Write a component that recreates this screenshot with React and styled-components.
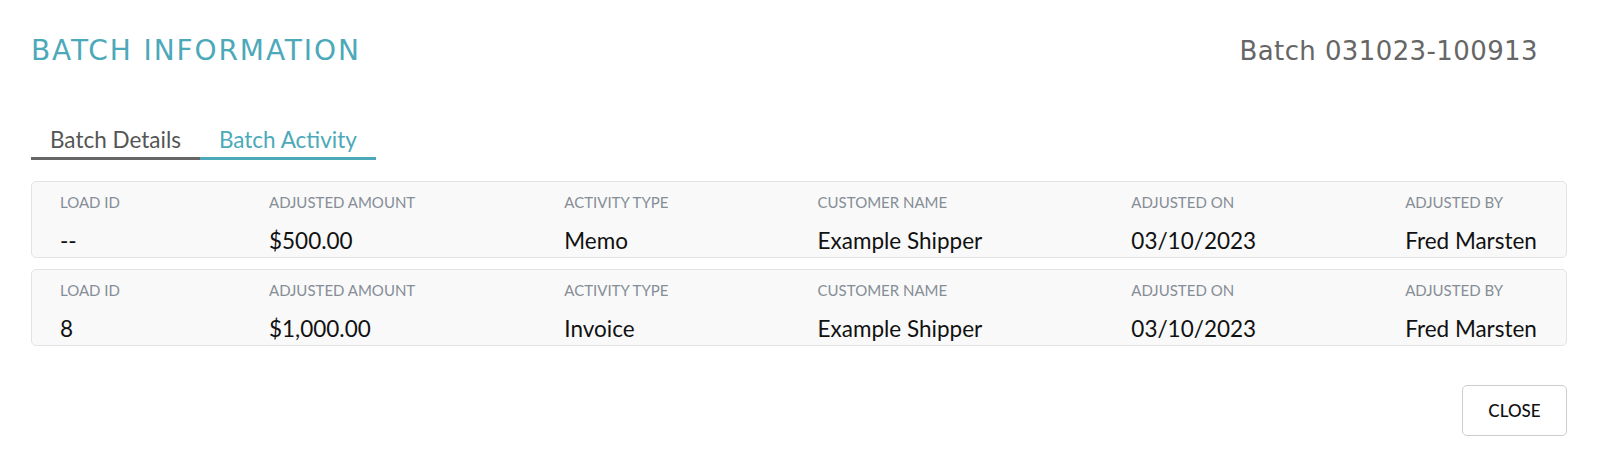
import React from "react";
import styled, { createGlobalStyle } from "styled-components";

const GlobalStyle = createGlobalStyle`
  body {
    margin: 0;
    background: #fff;
    font-family: Lato, "Noto Sans", sans-serif;
  }
`;

const rows = [
  { loadId: "--", amount: "$500.00", type: "Memo", customer: "Example Shipper", on: "03/10/2023", by: "Fred Marsten" },
  { loadId: "8", amount: "$1,000.00", type: "Invoice", customer: "Example Shipper", on: "03/10/2023", by: "Fred Marsten" },
];

const columns = [
  ["LOAD ID", "loadId"],
  ["ADJUSTED AMOUNT", "amount"],
  ["ACTIVITY TYPE", "type"],
  ["CUSTOMER NAME", "customer"],
  ["ADJUSTED ON", "on"],
  ["ADJUSTED BY", "by"],
];

function App() {
  return (
    <>
      <GlobalStyle />
      <Modal>
        <Header>
          <Title>BATCH INFORMATION</Title>
          <BatchNo>Batch 031023-100913</BatchNo>
        </Header>
        <Tabs>
          <Tab>Batch Details</Tab>
          <Tab active>Batch Activity</Tab>
        </Tabs>
        <List>
          {rows.map((row, i) => (
            <Card key={i}>
              {columns.map(([label, key]) => (
                <Cell key={key}>
                  <Label>{label}</Label>
                  <Value>{row[key]}</Value>
                </Cell>
              ))}
            </Card>
          ))}
        </List>
        <Footer>
          <CloseButton>CLOSE</CloseButton>
        </Footer>
      </Modal>
    </>
  );
}

const Modal = styled.div`
  width: 1536px;
  margin-left: 31px;
  padding-top: 34px;
`;

const Header = styled.div`
  display: flex;
  justify-content: space-between;
  align-items: center;
  padding-right: 29px;
`;

const Title = styled.h1`
  margin: 0;
  font-family: "DejaVu Sans", sans-serif;
  font-weight: 400;
  font-size: 28px;
  line-height: 34px;
  color: #4ba9b9;
  letter-spacing: 1.9px;
`;

const BatchNo = styled.div`
  font-family: "DejaVu Sans", sans-serif;
  font-size: 26px;
  line-height: 34px;
  color: #666;
  letter-spacing: 0.4px;
`;

const Tabs = styled.div`
  display: flex;
  margin-top: 57px;
`;

const Tab = styled.div`
  padding: 0 19px 2px;
  font-size: 22.5px;
  line-height: 30px;
  color: ${(p) => (p.active ? "#4ba9b9" : "#555")};
  border-bottom: 3px solid ${(p) => (p.active ? "#4ba9b9" : "#666")};
  cursor: pointer;
`;

const List = styled.div`
  display: flex;
  flex-direction: column;
  gap: 11px;
  margin-top: 21px;
`;

const Card = styled.div`
  display: flex;
  justify-content: space-between;
  height: 77px;
  box-sizing: border-box;
  padding: 10px 29px 0 28px;
  background: #f9f9f9;
  border: 1px solid #e2e4e4;
  border-radius: 5px;
`;

const Cell = styled.div`
  display: flex;
  flex-direction: column;
`;

const Label = styled.div`
  font-size: 15px;
  line-height: 20px;
  color: #858d96;
`;

const Value = styled.div`
  margin-top: 16px;
  font-size: 22.5px;
  line-height: 26px;
  color: #111;
`;

const Footer = styled.div`
  display: flex;
  justify-content: flex-end;
  margin-top: 39px;
`;

const CloseButton = styled.button`
  width: 105px;
  height: 51px;
  background: #fff;
  border: 1px solid #ccc;
  border-radius: 5px;
  font-family: Lato, sans-serif;
  font-size: 17px;
  font-weight: 500;
  color: #111;
  cursor: pointer;
`;

export default App;
